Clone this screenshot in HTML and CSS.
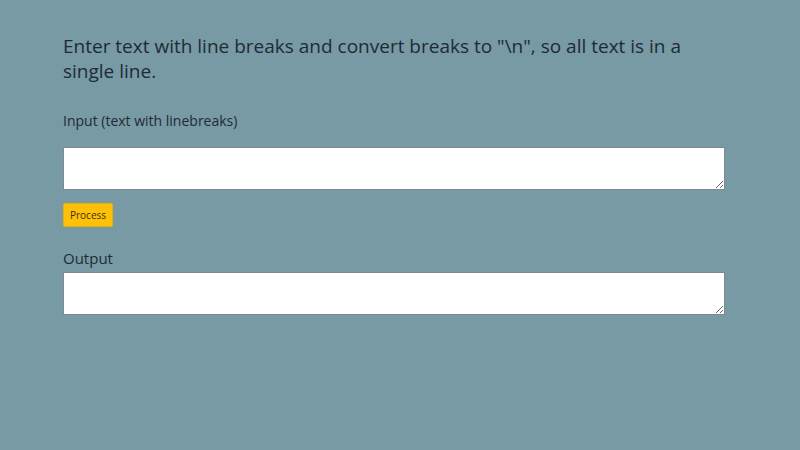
FILE: index.html
```html
<!DOCTYPE html>
<html lang="en">
<head>
    <meta charset="UTF-8">
    <meta name="viewport" content="width=device-width, initial-scale=1.0">
    <title>Line breaks to \n</title>
    <link rel="stylesheet" href="styles.css">
</head>
<body>
    <div class="container">
        <h1 class="title">Enter text with line breaks and convert breaks to "\n", so all text is in a single line.</h1>

        <label class="label" for="input">Input (text with linebreaks)</label>
        <textarea class="field" id="input"></textarea>
        <button class="btn-process" onclick="processText()">Process</button>

        <label class="label label-output" for="output">Output</label>
        <textarea class="field" id="output"></textarea>
    </div>

    <script>
        function processText() {
            const text = document.getElementById('input').value;
            document.getElementById('output').value = text.replace(/\r?\n/g, '\\n');
        }
    </script>
</body>
</html>
```

FILE: styles.css
```css
* {
    margin: 0;
    padding: 0;
    box-sizing: border-box;
}

body {
    background: #779aa4;
    color: #1e2b36;
    font-family: "Open Sans", "Noto Sans", sans-serif;
    min-height: 100vh;
}

.container {
    width: 662px;
    margin-left: 63px;
    padding-top: 34px;
    display: flex;
    flex-direction: column;
    align-items: flex-start;
}

.title {
    font-size: 19px;
    font-weight: 400;
    line-height: 25px;
    margin-bottom: 27px;
}

.label {
    font-size: 14px;
    line-height: 20px;
    margin-bottom: 16px;
}

.label-output {
    margin-bottom: 4px;
    font-size: 15px;
}

.field {
    width: 100%;
    height: 43px;
    border: 1px solid #7c8a90;
    background: #fff;
    font-family: inherit;
    font-size: 14px;
}

.btn-process {
    margin-top: 13px;
    margin-bottom: 21px;
    background: #ffc107;
    border: 1px solid #e6b00a;
    border-radius: 2px;
    font-family: inherit;
    font-size: 10px;
    color: #3a2e10;
    padding: 4px 6px;
    cursor: pointer;
}
```
